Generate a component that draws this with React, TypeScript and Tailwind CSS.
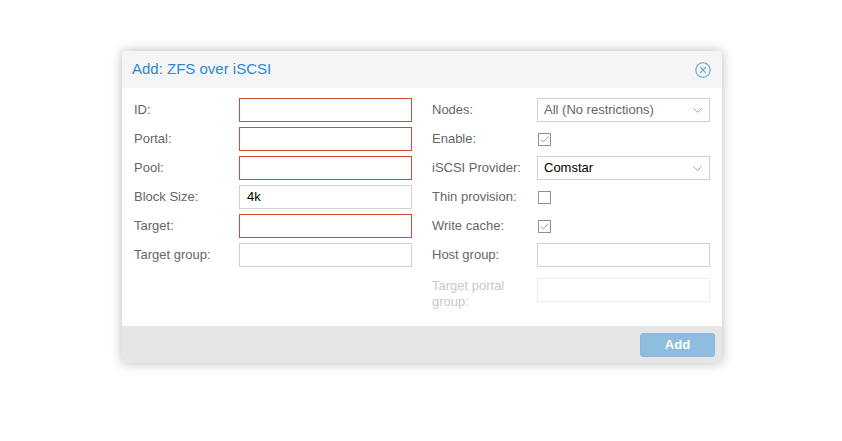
const font = { fontFamily: '"Liberation Sans", Arial, Helvetica, sans-serif' };

function TextField({ label, value, invalid }: { label: string; value?: string; invalid?: boolean }) {
  return (
    <div className="flex h-6 items-center">
      <label className="w-[105px] shrink-0 text-[13px] text-[#666]">{label}</label>
      <div
        className={`flex h-6 w-[173px] items-center border pl-[7px] pr-2 text-[13px] text-black ${
          invalid ? "border-[#cf4c35]" : "border-[#d0d0d0]"
        }`}
      >
        {value}
      </div>
    </div>
  );
}

function SelectField({ label, value, muted }: { label: string; value: string; muted?: boolean }) {
  return (
    <div className="flex h-6 items-center">
      <label className="w-[105px] shrink-0 text-[13px] text-[#666]">{label}</label>
      <div className="flex h-6 w-[173px] items-center justify-between border border-[#d0d0d0] pl-[6px] pr-[7px] text-[13px]">
        <span className={muted ? "text-[#666]" : "text-black"}>{value}</span>
        <svg viewBox="0 0 9 5" className="h-[5px] w-[9px]">
          <path d="M0.5 0.5 L4.5 4.5 L8.5 0.5" fill="none" stroke="#a8a8a8" strokeWidth="1" />
        </svg>
      </div>
    </div>
  );
}

function CheckField({ label, checked }: { label: string; checked?: boolean }) {
  return (
    <div className="flex h-6 items-center">
      <label className="w-[105px] shrink-0 text-[13px] text-[#666]">{label}</label>
      <div className="ml-px flex h-[13px] w-[13px] items-center justify-center border border-[#919191] bg-white">
        {checked && (
          <svg viewBox="0 0 13 13" className="h-[13px] w-[13px]">
            <path d="M2 6.5 L5 9.5 L11 3" fill="none" stroke="#919191" strokeWidth="1" />
          </svg>
        )}
      </div>
    </div>
  );
}

export default function App() {
  return (
    <div className="relative h-[441px] w-[842px] bg-white" style={font}>
      <div className="absolute left-[122px] top-[51px] w-[600px] rounded-[3px] bg-white shadow-[0_0_12px_rgba(0,0,0,0.28)]">
        <div className="flex h-[37px] items-center justify-between rounded-t-[3px] bg-[#f5f5f5] pl-[10px] pr-[11px]">
          <span className="text-[15px] text-[#2a8ad3]">Add: ZFS over iSCSI</span>
          <svg viewBox="0 0 16 16" className="h-[16px] w-[16px]">
            <circle cx="8" cy="8" r="7.2" fill="none" stroke="#5da4dc" strokeWidth="1.1" />
            <path d="M5.2 5.2 L10.8 10.8 M10.8 5.2 L5.2 10.8" stroke="#5da4dc" strokeWidth="1.1" />
          </svg>
        </div>
        <div className="flex h-[238px] gap-5 pl-3 pt-[10px]">
          <div className="flex w-[278px] flex-col gap-[5px]">
            <TextField label="ID:" invalid />
            <TextField label="Portal:" invalid />
            <TextField label="Pool:" invalid />
            <TextField label="Block Size:" value="4k" />
            <TextField label="Target:" invalid />
            <TextField label="Target group:" />
          </div>
          <div className="flex w-[278px] flex-col gap-[5px]">
            <SelectField label="Nodes:" value="All (No restrictions)" muted />
            <CheckField label="Enable:" checked />
            <SelectField label="iSCSI Provider:" value="Comstar" />
            <CheckField label="Thin provision:" />
            <CheckField label="Write cache:" checked />
            <TextField label="Host group:" />
            <div className="flex h-9 items-start">
              <label className="mt-[6px] w-[105px] shrink-0 text-[13px] leading-4 text-[#c8c8c8]">
                Target portal
                <br />
                group:
              </label>
              <div className="mt-[6px] h-6 w-[173px] border border-[#ececec]" />
            </div>
          </div>
        </div>
        <div className="flex h-[37px] items-center justify-end rounded-b-[3px] bg-[#e6e6e6] pr-[7px]">
          <button
            type="button"
            className="h-6 w-[75px] rounded-[3px] border border-[#8ab8de] bg-[#8fbde0] text-[13px] font-bold text-white"
          >
            Add
          </button>
        </div>
      </div>
    </div>
  );
}
